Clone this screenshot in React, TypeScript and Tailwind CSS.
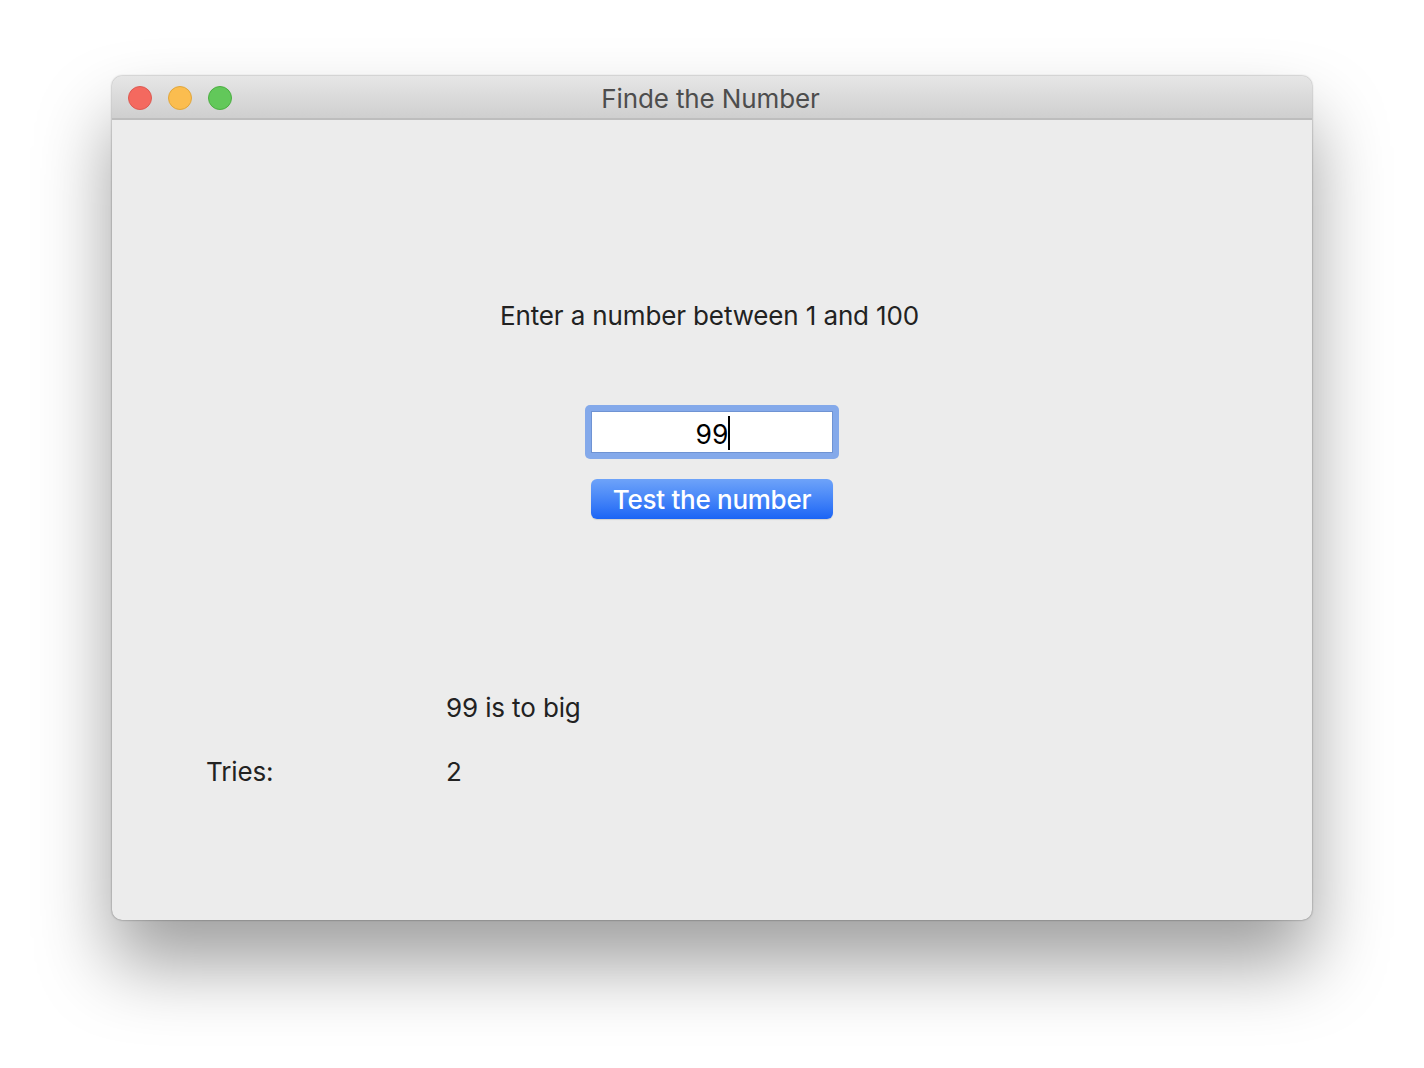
export default function App() {
  return (
    <div className="h-[1068px] w-[1424px] overflow-hidden bg-white pl-[112px] pt-[76px] font-['Inter',sans-serif] text-[26px] tracking-[-0.13px] text-[#222222]">
      {/* window */}
      <div className="flex h-[844px] w-[1200px] flex-col overflow-hidden rounded-[10px] bg-[#ececec] shadow-[0_44px_74px_rgba(0,0,0,0.38),0_0_2px_rgba(0,0,0,0.5)]">
        <div className="relative flex h-[44px] shrink-0 items-center gap-[16px] border-b-2 border-[#bdbdbd] bg-gradient-to-b from-[#e6e6e6] to-[#cfcfcf] pl-[16px] pt-[2px]">
          <span className="h-6 w-6 rounded-full border border-[#dc5a52] bg-[#f4695f]" />
          <span className="h-6 w-6 rounded-full border border-[#e0a63c] bg-[#fbbd4f]" />
          <span className="h-6 w-6 rounded-full border border-[#4cae42] bg-[#62c85a]" />
          <span className="absolute inset-x-0 top-0 pr-[3px] text-center text-[26px] leading-[46px] text-[#4d4d4d]">
            Finde the Number
          </span>
        </div>

        <div className="flex flex-1 flex-col">
          <p className="mt-[180px] pr-[5px] text-center leading-[32px]">Enter a number between 1 and 100</p>

          <div className="mt-[73px] flex flex-col items-center">
            <div className="rounded-[5px] bg-[#84a9ea] p-[6px]">
              <div className="flex h-[42px] w-[242px] items-center justify-center border border-[#6f93d3] bg-white pl-[2px] pt-[2px] text-[26.5px] tracking-normal text-black">
                <span className="pt-[4px]">99</span>
                <span className="h-[34px] w-[2px] bg-black" />
              </div>
            </div>
            <button className="mt-[20px] h-[40px] w-[242px] rounded-[6px] bg-gradient-to-b from-[#6ea3f9] to-[#1a64f5] text-[26px] font-medium leading-[42px] tracking-[-0.27px] text-white shadow-[0_1px_1px_rgba(0,0,0,0.12)]">
              Test the number
            </button>
          </div>

          <div className="mt-[173px] flex flex-col gap-[32px] pl-[94px] leading-[32px]">
            <div className="flex">
              <span className="w-[240px]" />
              <span>99 is to big</span>
            </div>
            <div className="flex">
              <span className="w-[240px]">Tries:</span>
              <span>2</span>
            </div>
          </div>
        </div>
      </div>
    </div>
  );
}
